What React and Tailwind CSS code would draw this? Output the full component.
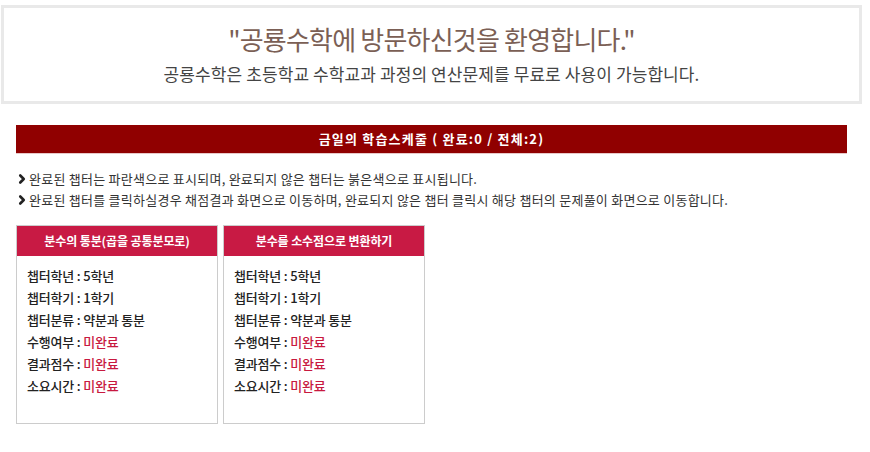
import { ChevronRight } from "lucide-react";

const chapters = [
  {
    title: "분수의 통분(곱을 공통분모로)",
    grade: "5학년",
    term: "1학기",
    category: "약분과 통분",
  },
  {
    title: "분수를 소수점으로 변환하기",
    grade: "5학년",
    term: "1학기",
    category: "약분과 통분",
  },
];

const kr = { fontFamily: '"Noto Sans CJK KR", "Noto Sans", sans-serif' };

function Row({ label, value, red }) {
  return (
    <div className="h-[22px] leading-[22px] text-[13px] font-medium text-[#222] tracking-[-0.2px]">
      {label} : <span className={red ? "text-[#c8193f]" : ""}>{value}</span>
    </div>
  );
}

function ChapterCard({ chapter }) {
  return (
    <div className="w-[202px] h-[199px] border border-[#cccccc] bg-white">
      <div className="h-[30px] bg-[#c81a44] flex items-center justify-center text-white text-[12px] font-bold tracking-[-0.1px]">
        {chapter.title}
      </div>
      <div className="pt-[9px] pl-[10px]">
        <Row label="챕터학년" value={chapter.grade} />
        <Row label="챕터학기" value={chapter.term} />
        <Row label="챕터분류" value={chapter.category} />
        <Row label="수행여부" value="미완료" red />
        <Row label="결과점수" value="미완료" red />
        <Row label="소요시간" value="미완료" red />
      </div>
    </div>
  );
}

export default function App() {
  return (
    <div className="w-[870px] h-[452px] bg-white pt-[5px]" style={kr}>
      <div className="ml-[1px] w-[861px] h-[99px] border-[3px] border-[#e9e9e9] flex flex-col items-center">
        <div className="mt-[14px] h-[34px] leading-[34px] text-[26px] text-[#7b5f55] tracking-[-0.8px]">
          "공룡수학에 방문하신것을 환영합니다."
        </div>
        <div className="mt-[6px] h-[24px] leading-[24px] text-[17px] text-[#444] tracking-[0.1px]">
          공룡수학은 초등학교 수학교과 과정의 연산문제를 무료로 사용이 가능합니다.
        </div>
      </div>

      <div className="mt-[21px] ml-[16px] w-[831px] h-[29px] bg-[#900000] border-b border-[#e8c8c8] flex items-center justify-center text-white text-[13px] font-bold tracking-[1.2px]">
        금일의 학습스케줄 ( 완료:0 / 전체:2)
      </div>

      <div className="mt-[14px] ml-[15px] text-[13px] text-[#333] tracking-[0.25px]">
        <div className="flex items-center h-[21px]">
          <ChevronRight size={14} strokeWidth={4.5} className="text-[#222]" />
          완료된 챕터는 파란색으로 표시되며, 완료되지 않은 챕터는 붉은색으로 표시됩니다.
        </div>
        <div className="flex items-center h-[21px]">
          <ChevronRight size={14} strokeWidth={4.5} className="text-[#222]" />
          완료된 챕터를 클릭하실경우 채점결과 화면으로 이동하며, 완료되지 않은 챕터 클릭시 해당 챕터의 문제풀이 화면으로 이동합니다.
        </div>
      </div>

      <div className="mt-[15px] ml-[16px] flex gap-[5px]">
        {chapters.map((c) => (
          <ChapterCard key={c.title} chapter={c} />
        ))}
      </div>
    </div>
  );
}
